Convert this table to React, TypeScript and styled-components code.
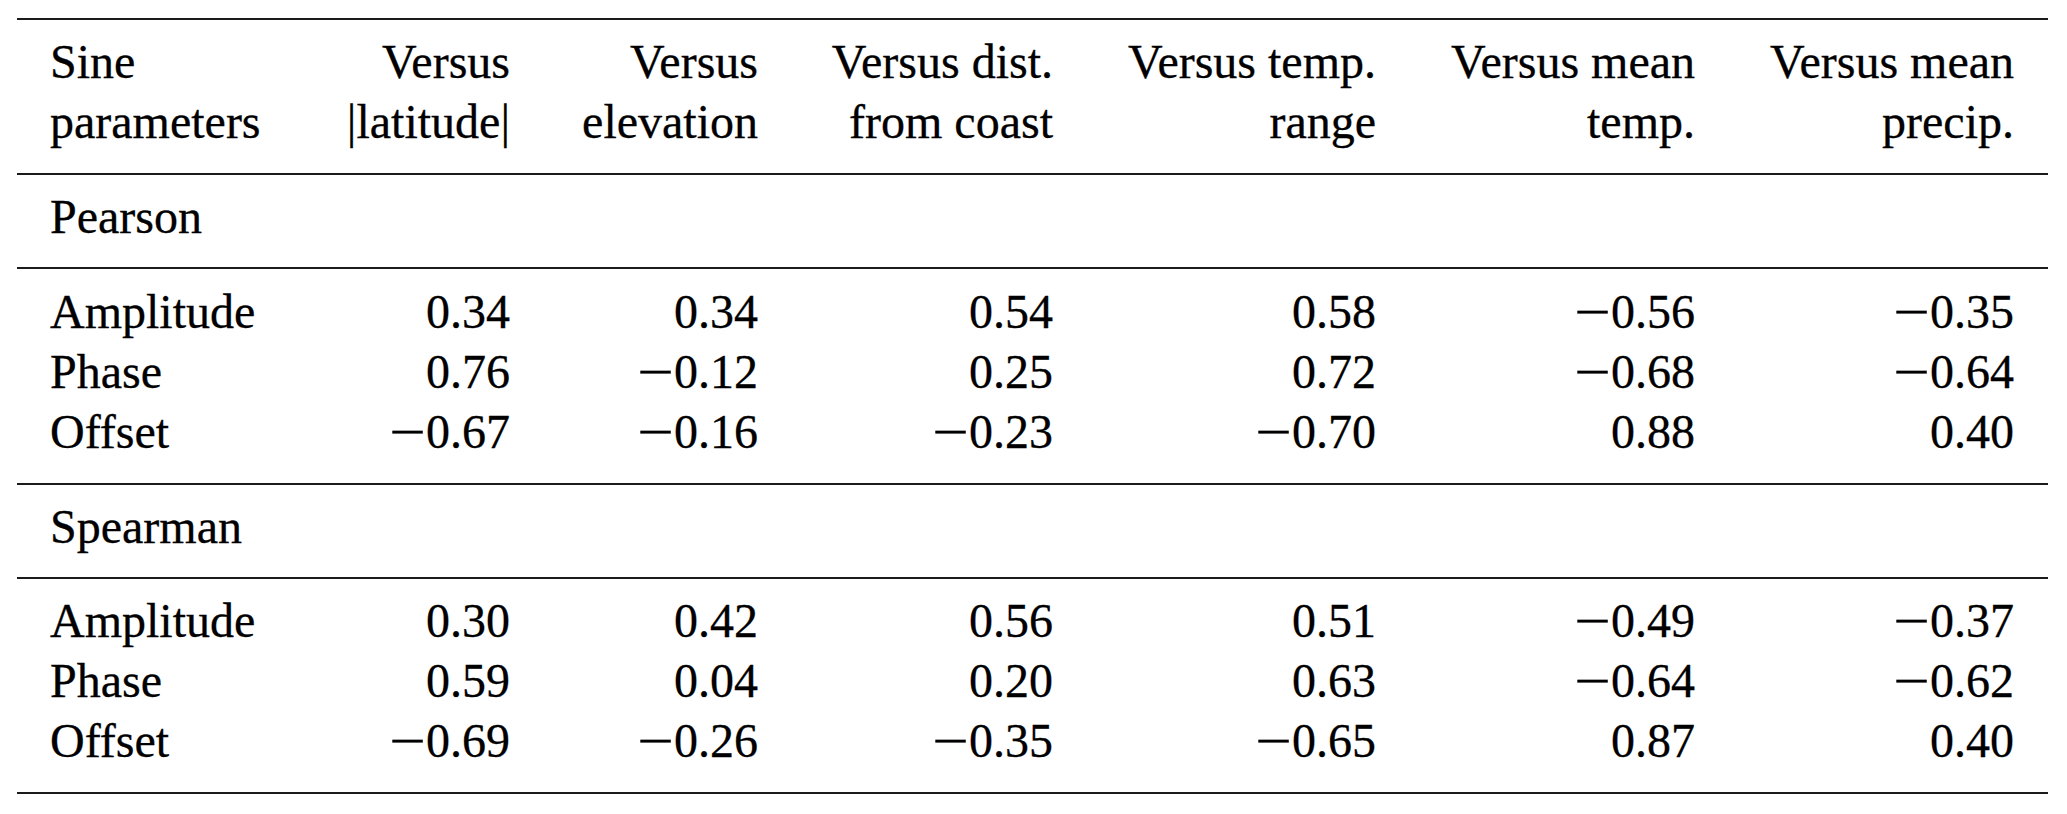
import React from 'react';
import styled, { createGlobalStyle } from 'styled-components';

const GlobalStyle = createGlobalStyle`
  html, body {
    margin: 0;
    padding: 0;
    background: #ffffff;
  }
  body {
    font-family: "Liberation Serif", "Times New Roman", serif;
    color: #000;
  }
`;

const Page = styled.div`
  padding: 18px 0 0 17px;
`;

const Table = styled.table`
  width: 2031px;
  table-layout: fixed;
  border-collapse: collapse;
  border-top: 2px solid #1b1b1b;
  font-size: 48px;
  line-height: 60px;
  -webkit-text-stroke: 0.3px #000;
`;

const Cell = styled.td<{ $label?: boolean; $last?: boolean }>`
  padding: 0;
  padding-left: ${({ $label }) => ($label ? '33px' : '0')};
  padding-right: ${({ $last }) => ($last ? '34px' : '0')};
  text-align: ${({ $label }) => ($label ? 'left' : 'right')};
  white-space: nowrap;
  vertical-align: top;
`;

const HeadRow = styled.tr`
  border-bottom: 2px solid #1b1b1b;

  td {
    padding-top: 12px;
    padding-bottom: 21px;
  }
`;

const SectionRow = styled.tr`
  border-bottom: 2px solid #1b1b1b;

  td {
    padding-top: 12px;
    padding-bottom: 20px;
  }
`;

const DataBody = styled.tbody<{ $top: number; $bottom: number }>`
  tr:first-child td {
    padding-top: ${({ $top }) => $top}px;
  }
  tr:last-child {
    border-bottom: 2px solid #1b1b1b;
  }
  tr:last-child td {
    padding-bottom: ${({ $bottom }) => $bottom}px;
  }
`;

const Minus = styled.span`
  display: inline-block;
  width: 37px;
  text-align: left;
  transform: scaleX(1.35);
  transform-origin: left center;
`;

const colWidths = [283, 210, 248, 295, 323, 319, 353];

const headers: [string, string][] = [
  ['Versus', '|latitude|'],
  ['Versus', 'elevation'],
  ['Versus dist.', 'from coast'],
  ['Versus temp.', 'range'],
  ['Versus mean', 'temp.'],
  ['Versus mean', 'precip.'],
];

const sections = [
  {
    name: 'Pearson',
    top: 13,
    bottom: 21,
    rows: [
      ['Amplitude', '0.34', '0.34', '0.54', '0.58', '-0.56', '-0.35'],
      ['Phase', '0.76', '-0.12', '0.25', '0.72', '-0.68', '-0.64'],
      ['Offset', '-0.67', '-0.16', '-0.23', '-0.70', '0.88', '0.40'],
    ],
  },
  {
    name: 'Spearman',
    top: 12,
    bottom: 21,
    rows: [
      ['Amplitude', '0.30', '0.42', '0.56', '0.51', '-0.49', '-0.37'],
      ['Phase', '0.59', '0.04', '0.20', '0.63', '-0.64', '-0.62'],
      ['Offset', '-0.69', '-0.26', '-0.35', '-0.65', '0.87', '0.40'],
    ],
  },
];

const Value = ({ v }: { v: string }) =>
  v.startsWith('-') ? (
    <>
      <Minus>−</Minus>
      {v.slice(1)}
    </>
  ) : (
    <>{v}</>
  );

export default function App() {
  return (
    <>
      <GlobalStyle />
      <Page>
        <Table>
          <colgroup>
            {colWidths.map((w, i) => (
              <col key={i} style={{ width: w }} />
            ))}
          </colgroup>
          <thead>
            <HeadRow>
              <Cell $label>
                Sine
                <br />
                parameters
              </Cell>
              {headers.map(([a, b], i) => (
                <Cell key={i} $last={i === headers.length - 1}>
                  {a}
                  <br />
                  {b}
                </Cell>
              ))}
            </HeadRow>
          </thead>
          {sections.map((s) => (
            <React.Fragment key={s.name}>
              <tbody>
                <SectionRow>
                  <Cell $label colSpan={7}>
                    {s.name}
                  </Cell>
                </SectionRow>
              </tbody>
              <DataBody $top={s.top} $bottom={s.bottom}>
                {s.rows.map((r) => (
                  <tr key={r[0]}>
                    <Cell $label>{r[0]}</Cell>
                    {r.slice(1).map((v, i) => (
                      <Cell key={i} $last={i === r.length - 2}>
                        <Value v={v} />
                      </Cell>
                    ))}
                  </tr>
                ))}
              </DataBody>
            </React.Fragment>
          ))}
        </Table>
      </Page>
    </>
  );
}
